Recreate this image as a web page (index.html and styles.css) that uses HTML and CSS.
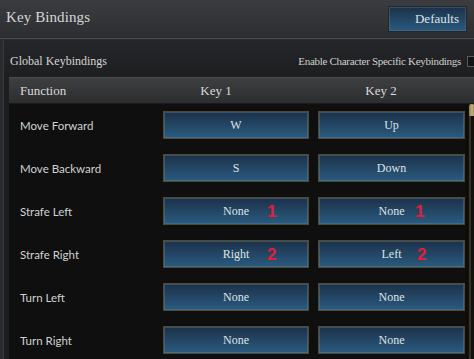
FILE: index.html
```html
<!DOCTYPE html>
<html>
<head>
<meta charset="utf-8">
<link rel="stylesheet" href="styles.css">
</head>
<body>
<div class="window">
  <header class="titlebar">
    <h1 class="title">Key Bindings</h1>
    <button class="btn defaults">Defaults</button>
  </header>
  <div class="separator"></div>
  <section class="panel">
    <div class="panel-head">
      <span class="panel-title">Global Keybindings</span>
      <label class="enable">Enable Character Specific Keybindings<span class="checkbox"></span></label>
    </div>
    <div class="table">
      <div class="thead">
        <span class="th th-func">Function</span>
        <span class="th th-key">Key 1</span>
        <span class="th th-key">Key 2</span>
      </div>
      <div class="tbody">
        <div class="rows">
          <div class="row"><span class="label">Move Forward</span><button class="btn key">W</button><button class="btn key">Up</button></div>
          <div class="row"><span class="label">Move Backward</span><button class="btn key">S</button><button class="btn key">Down</button></div>
          <div class="row"><span class="label">Strafe Left</span><button class="btn key">None<span class="mark mark-k1">1</span></button><button class="btn key">None<span class="mark mark-k2">1</span></button></div>
          <div class="row"><span class="label">Strafe Right</span><button class="btn key">Right<span class="mark mark-k1">2</span></button><button class="btn key">Left<span class="mark mark-k2b">2</span></button></div>
          <div class="row"><span class="label">Turn Left</span><button class="btn key">None</button><button class="btn key">None</button></div>
          <div class="row"><span class="label">Turn Right</span><button class="btn key">None</button><button class="btn key">None</button></div>
        </div>
        <div class="scrollbar"><div class="thumb"></div></div>
      </div>
    </div>
  </section>
</div>
</body>
</html>
```
FILE: styles.css
```css
html, body {
  margin: 0;
  padding: 0;
  width: 474px;
  height: 359px;
  overflow: hidden;
  background: #1c1d1f;
}
.window {
  width: 474px;
  height: 359px;
  display: flex;
  flex-direction: column;
  background: #2a2b2e;
  font-family: "Liberation Serif", "Times New Roman", serif;
}
.titlebar {
  height: 37px;
  flex: none;
  display: flex;
  align-items: flex-start;
  justify-content: space-between;
  padding: 0 7px 0 6px;
  background: linear-gradient(#3b3c3f, #2d2e31);
  box-sizing: border-box;
}
.title {
  margin: 9px 0 0 0;
  font-weight: normal;
  font-size: 15px;
  color: #d6d6d6;
  letter-spacing: 0.1px;
}
.btn {
  font-family: "Liberation Serif", "Times New Roman", serif;
  color: #dfe3e6;
  border: 1px solid #4f4a32;
  background: linear-gradient(#1c3149, #2a5b80);
  box-shadow: inset 0 0 0 1px rgba(110, 140, 160, 0.35);
  padding: 0;
  margin: 0;
  display: flex;
  align-items: center;
  justify-content: center;
  position: relative;
  box-sizing: border-box;
}
.defaults {
  margin-top: 6px;
  width: 79px;
  height: 26px;
  font-size: 13px;
  padding-left: 19px;
  border-color: #23272b;
  box-shadow: inset 0 0 0 1px rgba(90, 120, 140, 0.4);
}
.separator {
  height: 3px;
  flex: none;
  background: linear-gradient(#2a2b2e 0, #2a2b2e 1px, #4a4b4d 1px, #4a4b4d 2px, #2a2b2e 2px);
}
.panel {
  flex: 1;
  margin-left: 3px;
  border-left: 1px solid #3a3b3e;
  background: linear-gradient(#252629, #1d1e20 40px);
  display: flex;
  flex-direction: column;
}
.panel-head {
  height: 37px;
  flex: none;
  display: flex;
  align-items: center;
  justify-content: space-between;
  padding: 5px 0 0 6px;
  box-sizing: border-box;
}
.panel-title {
  font-size: 12px;
  color: #d4d4d4;
}
.enable {
  font-size: 11px;
  letter-spacing: -0.3px;
  color: #cfcfcf;
  display: flex;
  align-items: center;
  gap: 6px;
}
.checkbox {
  width: 9px;
  height: 9px;
  border: 1px solid #5a5a5a;
  background: #141416;
  margin-right: -4px;
}
.table {
  flex: 1;
  margin-left: 5px;
  display: flex;
  flex-direction: column;
}
.thead {
  height: 26px;
  flex: none;
  display: grid;
  grid-template-columns: 130px 154px 176px;
  align-items: center;
  background: linear-gradient(#3e3f41, #2c2d2f);
  border-top: 1px solid #4a4b4d;
  box-sizing: border-box;
  font-size: 13px;
  color: #dadada;
}
.th-func { padding-left: 11px; }
.th-key { text-align: center; }
.tbody {
  flex: 1;
  display: flex;
  background: #0f0f10;
  border-top: 1px solid #1a1a1b;
}
.rows {
  flex: none;
  width: 457px;
  display: flex;
  flex-direction: column;
  gap: 15px;
  padding-top: 7px;
}
.row {
  display: grid;
  grid-template-columns: 145px 146px 147px;
  column-gap: 9px;
  height: 28px;
  align-items: center;
}
.label {
  padding-left: 11px;
  font-family: Lato, "Noto Sans", sans-serif;
  font-size: 11.5px;
  color: #d2d2d2;
}
.key {
  height: 28px;
  font-size: 12px;
}
.mark {
  position: absolute;
  top: 4px;
  font-family: "Liberation Sans", Arial, sans-serif;
  font-weight: bold;
  font-size: 17px;
  color: #e0203a;
}
.mark-k1 { left: 103px; }
.mark-k2 { left: 96px; }
.mark-k2b { left: 98px; }
.scrollbar {
  flex: 1;
  position: relative;
  background: #121111;
  border-left: 2px solid #0c0c0c;
}
.scrollbar::before {
  content: "";
  position: absolute;
  left: 1px;
  top: 0;
  bottom: 0;
  width: 2px;
  background: #3a3020;
}
.thumb {
  position: absolute;
  left: 1px;
  top: 0;
  width: 6px;
  height: 12px;
  border-radius: 3px 3px 1px 1px;
  background: linear-gradient(90deg, #8a7a4a, #c8b27a, #8a7a4a);
}
```
